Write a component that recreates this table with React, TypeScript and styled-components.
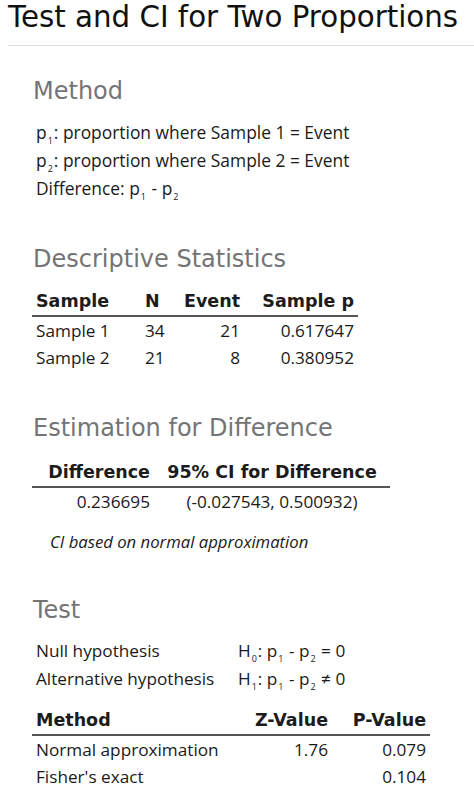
import React from 'react';
import styled, { createGlobalStyle } from 'styled-components';

const GlobalStyle = createGlobalStyle`
  html, body {
    margin: 0;
    padding: 0;
    background: #ffffff;
  }
  body {
    font-family: "Open Sans", "Liberation Sans", sans-serif;
    color: #1a1a1a;
  }
`;

const Page = styled.div`
  width: 474px;
  overflow: hidden;
`;

const Title = styled.h1`
  font-family: "DejaVu Sans", Verdana, sans-serif;
  font-weight: normal;
  font-size: 29.3px;
  line-height: 34px;
  margin: 0 0 0 8px;
  padding: 0 0 11px 0;
  color: #111;
  border-bottom: 1px solid #dcdcdc;
  white-space: nowrap;
`;

const Section = styled.section`
  padding: 0 0 0 33px;
`;

const Heading = styled.h2<{ $top: number }>`
  font-family: "DejaVu Sans", Verdana, sans-serif;
  font-weight: normal;
  font-size: 24px;
  line-height: 28px;
  color: #747474;
  margin: 0;
  padding-top: ${props => props.$top}px;
`;

const Lines = styled.div`
  padding: 13px 0 0 3px;
  font-size: 17.4px;
  line-height: 28px;
`;

const Sub = styled.span`
  font-size: 9px;
  line-height: 0;
  position: relative;
  top: 5px;
  margin: 0 1px 0 1px;
`;

const Table = styled.table<{ $top: number; $w: number }>`
  border-collapse: collapse;
  table-layout: fixed;
  width: ${props => props.$w}px;
  margin-top: ${props => props.$top}px;
  margin-left: -1px;
`;

const Th = styled.th<{ $align?: string; $w: number }>`
  box-sizing: border-box;
  width: ${props => props.$w}px;
  font-family: "DejaVu Sans", Verdana, sans-serif;
  font-weight: 600;
  font-size: 17.5px;
  line-height: 28px;
  color: #1c1c1c;
  text-align: ${props => props.$align || 'left'};
  padding: 0 4px;
  border-bottom: 2px solid #555;
  white-space: nowrap;
`;

const Td = styled.td<{ $align?: string }>`
  font-size: 17.2px;
  line-height: 27px;
  text-align: ${props => props.$align || 'left'};
  padding: 0 4px;
  white-space: nowrap;
`;

const Note = styled.div`
  font-style: italic;
  font-size: 16.7px;
  line-height: 22px;
  padding: 16px 0 0 17px;
`;

const HypoGrid = styled.div`
  display: grid;
  grid-template-columns: 202px auto;
  padding: 13px 0 0 3px;
  font-size: 17.2px;
  line-height: 28px;
`;

const Sp = ({ n }: { n: string }) => (
  <>p<Sub>{n}</Sub></>
);

export default function App() {
  return (
    <Page>
      <GlobalStyle />
      <Title>Test and CI for Two Proportions</Title>

      <Section>
        <Heading $top={31}>Method</Heading>
        <Lines>
          <div><Sp n="1" />: proportion where Sample 1 = Event</div>
          <div><Sp n="2" />: proportion where Sample 2 = Event</div>
          <div>Difference: <Sp n="1" /> - <Sp n="2" /></div>
        </Lines>
      </Section>

      <Section>
        <Heading $top={43}>Descriptive Statistics</Heading>
        <Table $top={14} $w={326}>
          <thead>
            <tr>
              <Th $w={109}>Sample</Th>
              <Th $w={29}>N</Th>
              <Th $w={74} $align="right">Event</Th>
              <Th $w={114} $align="right">Sample p</Th>
            </tr>
          </thead>
          <tbody>
            <tr>
              <Td>Sample 1</Td>
              <Td>34</Td>
              <Td $align="right">21</Td>
              <Td $align="right">0.617647</Td>
            </tr>
            <tr>
              <Td>Sample 2</Td>
              <Td>21</Td>
              <Td $align="right">8</Td>
              <Td $align="right">0.380952</Td>
            </tr>
          </tbody>
        </Table>
      </Section>

      <Section>
        <Heading $top={43}>Estimation for Difference</Heading>
        <Table $top={16} $w={358}>
          <thead>
            <tr>
              <Th $w={122} $align="right">Difference</Th>
              <Th $w={236} $align="center">95% CI for Difference</Th>
            </tr>
          </thead>
          <tbody>
            <tr>
              <Td $align="right">0.236695</Td>
              <Td $align="center">(-0.027543, 0.500932)</Td>
            </tr>
          </tbody>
        </Table>
        <Note>CI based on normal approximation</Note>
      </Section>

      <Section>
        <Heading $top={43}>Test</Heading>
        <HypoGrid>
          <div>Null hypothesis</div>
          <div>H<Sub>0</Sub>: <Sp n="1" /> - <Sp n="2" /> = 0</div>
          <div>Alternative hypothesis</div>
          <div>H<Sub>1</Sub>: <Sp n="1" /> - <Sp n="2" /> ≠ 0</div>
        </HypoGrid>
        <Table $top={13} $w={398}>
          <thead>
            <tr>
              <Th $w={208}>Method</Th>
              <Th $w={92} $align="right">Z-Value</Th>
              <Th $w={98} $align="right">P-Value</Th>
            </tr>
          </thead>
          <tbody>
            <tr>
              <Td>Normal approximation</Td>
              <Td $align="right">1.76</Td>
              <Td $align="right">0.079</Td>
            </tr>
            <tr>
              <Td>Fisher's exact</Td>
              <Td $align="right"></Td>
              <Td $align="right">0.104</Td>
            </tr>
          </tbody>
        </Table>
      </Section>
    </Page>
  );
}
